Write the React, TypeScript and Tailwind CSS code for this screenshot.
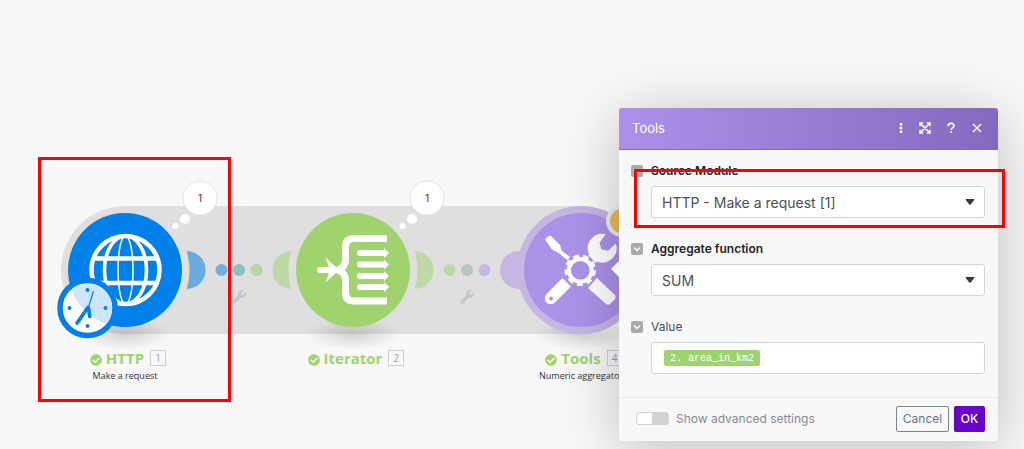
import { FaCheckCircle, FaWrench } from 'react-icons/fa';
import type { ReactNode } from 'react';

interface ModuleProps {
    name: string;
    id: number;
    note?: string;
    className: string;
    children: ReactNode;
}

const Module: React.FC<ModuleProps> = ({ name, id, note, className, children }) => {
    return (
        <div className={`absolute top-[206px] flex w-32 flex-col items-center font-['Open_Sans',sans-serif] ${className}`}>
            <div className="absolute top-28 h-8 w-24 bg-radial from-black/15 to-transparent to-70%" />
            <svg viewBox="0 0 128 128" className="relative size-32 overflow-visible">
                {children}
            </svg>
            <div className="mt-[14px] flex h-5 items-center gap-1 pl-[6px] whitespace-nowrap">
                <FaCheckCircle className="mt-1 size-3 text-[#9fd36d]" />
                <h2 className="text-[15px] leading-5 font-bold text-[#9fd36d]">{name}</h2>
                <span className="ml-[2px] flex size-4 items-center justify-center border border-[#cfcfcf] text-[10px] leading-none text-gray-400">
                    {id}
                </span>
            </div>
            {note && <p className="text-[9px] leading-4 whitespace-nowrap text-[#333]">{note}</p>}
        </div>
    );
};

const Bubble: React.FC<{ className: string }> = ({ className }) => {
    return (
        <div className={`absolute top-[180px] h-[50px] w-[46px] ${className}`}>
            <svg viewBox="0 0 46 50" className="absolute inset-0 h-full w-full">
                <circle cx="28" cy="18" r="17" fill="#fff" stroke="#e2e2e2" />
                <circle cx="13" cy="39" r="5" fill="#fff" />
                <circle cx="3.5" cy="46" r="3" fill="#fff" />
            </svg>
            <span className="absolute top-[10px] right-[2px] w-8 text-center font-['Inter',sans-serif] text-[10px] leading-4 text-[#333]">
                1
            </span>
        </div>
    );
};

const Link: React.FC<{ className: string; colors: string[] }> = ({ className, colors }) => {
    return (
        <div className={`absolute top-[264px] flex w-12 flex-col items-center gap-[14px] ${className}`}>
            <svg viewBox="0 0 48 12" className="h-3 w-12">
                {colors.map((color, i) => (
                    <circle key={i} cx={6.5 + i * 17.5} cy="6" r="6" fill={color} />
                ))}
            </svg>
            <FaWrench className="size-[14px] text-[#c6c6c6]" />
        </div>
    );
};

const Caret = () => (
    <svg viewBox="0 0 10 6" className="pointer-events-none absolute right-[9px] h-[6px] w-[10px]">
        <path d="M1 0.5h8L5.6 5.1a.8.8 0 0 1-1.2 0z" fill="#343a40" stroke="#343a40" strokeLinejoin="round" />
    </svg>
);

interface FieldProps {
    id: string;
    label: string;
    bold?: boolean;
    children: ReactNode;
}

const Field: React.FC<FieldProps> = ({ id, label, bold, children }) => {
    return (
        <div>
            <div className="flex h-5 items-center gap-2">
                <button type="button" aria-label={`Collapse ${label}`} className="size-3 rounded-[2px] bg-[#a9abab]">
                    <svg viewBox="0 0 12 12" className="size-3" fill="none" stroke="#fff" strokeWidth="1.5">
                        <path d="M3 4.5l3 3l3-3" />
                    </svg>
                </button>
                <label htmlFor={id} className={bold ? 'text-[12px] font-semibold text-[#212529]' : 'text-[12px] text-[#495057]'}>
                    {label}
                </label>
            </div>
            <div className="relative mt-[5px] ml-5 flex h-8 items-center rounded-[3px] border border-[#ced4da] bg-white">
                {children}
            </div>
        </div>
    );
};

const selectClass = 'h-full w-full appearance-none bg-transparent px-[10px] text-[14px] text-[#495057] outline-none';

const ToolsDialog = () => {
    return (
        <section className="absolute top-[108px] left-[619px] w-[379px] rounded-[3px] bg-[#f8f8f8] font-['Inter',sans-serif] shadow-[0_8px_60px_rgba(0,0,0,0.24)]">
            <svg viewBox="0 0 8 16" className="absolute top-[153px] -left-2 h-4 w-2">
                <path d="M8 0v16L0 8z" fill="#f8f8f8" />
            </svg>
            <header className="flex h-[42px] items-center rounded-t-[3px] border-b border-[#8466c4] bg-linear-to-r from-[#ab91e9] to-[#8469bf] pr-[15px] pl-[13px] text-white">
                <h1 className="flex-1 text-[13px]">Tools</h1>
                <div className="flex items-center gap-[14px] pb-[2px]">
                    <button type="button" aria-label="More">
                        <svg viewBox="0 0 8 12" className="h-3 w-2" fill="currentColor">
                            <path d="M2.7 1h2.6v2.4H2.7zM2.7 4.8h2.6v2.4H2.7zM2.7 8.6h2.6V11H2.7z" />
                        </svg>
                    </button>
                    <button type="button" aria-label="Expand">
                        <svg viewBox="0 0 12 12" className="size-3" fill="none" stroke="currentColor" strokeWidth="1.5">
                            <path d="M1 4.2V1h3.2M7.8 1H11v3.2M11 7.8V11H7.8M4.2 11H1V7.8M1.5 1.5l9 9M10.5 1.5l-9 9" />
                        </svg>
                    </button>
                    <button type="button" aria-label="Help">
                        <svg viewBox="0 0 12 12" className="size-3" fill="none" stroke="currentColor" strokeWidth="1.7">
                            <path d="M3 4.2C3 .4 9 .4 9 3.8 9 5.8 6.2 5.6 6.2 8M6.2 9.2V11" />
                        </svg>
                    </button>
                    <button type="button" aria-label="Close">
                        <svg viewBox="0 0 12 12" className="size-3" fill="none" stroke="currentColor" strokeWidth="1.4">
                            <path d="M2 2l8 8M10 2l-8 8" />
                        </svg>
                    </button>
                </div>
            </header>
            <form className="flex flex-col gap-[21px] pt-[11px] pr-[13px] pb-[23px] pl-3">
                <Field id="source" label="Source Module" bold>
                    <select id="source" className={selectClass}>
                        <option>HTTP - Make a request [1]</option>
                    </select>
                    <Caret />
                </Field>
                <Field id="aggregate" label="Aggregate function" bold>
                    <select id="aggregate" className={selectClass}>
                        <option>SUM</option>
                    </select>
                    <Caret />
                </Field>
                <Field id="value" label="Value">
                    <span className="ml-3 flex h-4 shrink-0 items-center rounded-[2px] bg-[#9fd36d] px-[6px] font-['Liberation_Mono',monospace] text-[10px] text-white">
                        2. area_in_km2
                    </span>
                    <input id="value" type="text" className="h-full w-full min-w-0 bg-transparent px-1 text-[14px] outline-none" />
                </Field>
            </form>
            <footer className="flex h-11 items-center border-t border-[#e9e9e9] pr-[13px] pb-[2px] pl-[17px]">
                <input
                    id="advanced"
                    type="checkbox"
                    className="h-[13px] w-[33px] appearance-none rounded-[3px] border border-[#d2d2d2] bg-[linear-gradient(to_right,white_15px,#d2d2d2_15px)]"
                />
                <label htmlFor="advanced" className="ml-[7px] flex-1 text-[12px] text-[#868b90]">Show advanced settings</label>
                <button type="button" className="h-[26px] w-[53px] rounded-[2px] border border-[#7d858c] text-[12px] text-[#6c757d]">Cancel</button>
                <button type="button" className="ml-[5px] h-[26px] w-[31px] rounded-[2px] bg-[#6a00cc] text-[12px] font-medium text-white">OK</button>
            </footer>
        </section>
    );
};

export default function App() {
    return (
        <main className="relative min-h-screen w-full overflow-hidden bg-[#f8f8f8]">
            <div className="absolute top-[206px] left-[61px] h-32 w-[520px] rounded-l-full bg-[#dfdfdf]" />

            <Link className="left-[215px]" colors={['#73afe0', '#8fc0c0', '#b5d6a7']} />
            <Link className="left-[443px]" colors={['#b9dba2', '#bdc3c1', '#c4b9e2']} />

            <Module name="HTTP" id={1} note="Make a request" className="left-[61px]">
                <path d="M125.6 45A19 19 0 0 1 125.6 83A64 64 0 0 0 125.6 45" fill="#6cabe0" />
                <circle cx="64" cy="64" r="57" fill="#0080e8" />
                <g fill="none" stroke="#fff" strokeWidth="4.5">
                    <circle cx="64.5" cy="64" r="34" />
                    <path d="M33 52.5h63M33 77h63" />
                    <ellipse cx="64.5" cy="64" rx="21" ry="34" strokeWidth="3.6" />
                    <ellipse cx="64.5" cy="64" rx="7.5" ry="34" strokeWidth="1.5" />
                </g>
                <clipPath id="clock-face">
                    <circle cx="26.5" cy="102" r="24.5" />
                </clipPath>
                <circle cx="26.5" cy="102" r="27.5" fill="#fff" stroke="#0080e8" strokeWidth="5.5" />
                <circle cx="64" cy="64" r="57" fill="#cce5fa" clipPath="url(#clock-face)" />
                <g fill="none" stroke="#0080e8" strokeLinecap="round">
                    <path d="M27 101.5L16 117" strokeWidth="3.6" />
                    <path d="M27.5 102L28.7 110.5" strokeWidth="3.6" />
                    <path d="M27 103L32.3 85.5" strokeWidth="1.2" />
                </g>
                <g fill="#0080e8">
                    <circle cx="26.5" cy="84" r="2" />
                    <circle cx="44.5" cy="102" r="2" />
                    <circle cx="26.5" cy="120" r="2" />
                    <circle cx="8.5" cy="102" r="2" />
                </g>
            </Module>

            <Module name="Iterator" id={2} className="left-[289px]">
                <path d="M125.6 45A19 19 0 0 1 125.6 83A64 64 0 0 0 125.6 45M2.4 45A19 19 0 0 0 2.4 83A64 64 0 0 1 2.4 45" fill="#bfd9a6" />
                <circle cx="64" cy="64" r="57" fill="#a0d36d" />
                <path d="M98 32.5H65Q56.5 32.5 56.5 41V54Q56.5 61 49 64Q56.5 67 56.5 74V86.5Q56.5 95 65 95H98" fill="none" stroke="#fff" strokeWidth="7" />
                <path d="M31 61Q28 61 28 64T31 67H40L36.5 76.5L50 64L36.5 51.5L40 61z" fill="#fff" />
                {[47, 58.5, 70, 81].map((y) => (
                    <path key={y} d={`M71 ${y - 3}h24v-2l5 5l-5 5v-2H71a3 3 0 0 1 0 -6z`} fill="#fff" />
                ))}
            </Module>

            <Module name="Tools" id={4} note="Numeric aggregator" className="left-[517px]">
                <circle cx="2" cy="64" r="19" fill="#c5b7e3" />
                <circle cx="64" cy="64" r="64" fill="#c5b7e3" />
                <circle cx="64" cy="64" r="57" fill="#ab92e9" />
                <g fill="#fff">
                    <path d="M28 33.5Q30 30 33.7 29.7L43 39L44.7 44.7L55 52.5L52 55.5L41.3 46.7L34.7 43.3z" />
                    <path d="M45.5 72L54 80.5L38 96.5A6 6 0 0 1 29.5 88z" />
                    <path d="M71 82L80 72L98 89Q99.5 91 98 93L93 98Q91 99.5 89 98z" />
                    <path d="M88.7 28.3L82.5 36.7L84.3 43.3L91.3 44.7L98.8 37.5A14.3 14.3 0 0 1 80 55.5L76 59L70 53L72 48A14.3 14.3 0 0 1 88.7 28.3" />
                </g>
                <circle cx="34" cy="92.5" r="2" fill="#ab92e9" />
                <circle cx="63.3" cy="64.3" r="16.5" fill="#ab92e9" />
                <circle cx="63.3" cy="64.3" r="11.4" fill="none" stroke="#fff" strokeWidth="4.2" />
                <circle cx="63.3" cy="64.3" r="14" fill="none" stroke="#fff" strokeWidth="3.6" strokeDasharray="5.6 4.17" />
                <circle cx="105" cy="15" r="14" fill="#e9bc55" stroke="#ededed" strokeWidth="4" />
            </Module>

            <Bubble className="left-[172px]" />
            <Bubble className="left-[399px]" />

            <ToolsDialog />

            <div className="pointer-events-none absolute top-[157px] left-[38px] h-[245px] w-[193px] border-3 border-[#ff0000]" />
            <div className="pointer-events-none absolute top-[169px] left-[634px] h-[59px] w-[371px] border-3 border-[#ff0000]" />
        </main>
    );
}
